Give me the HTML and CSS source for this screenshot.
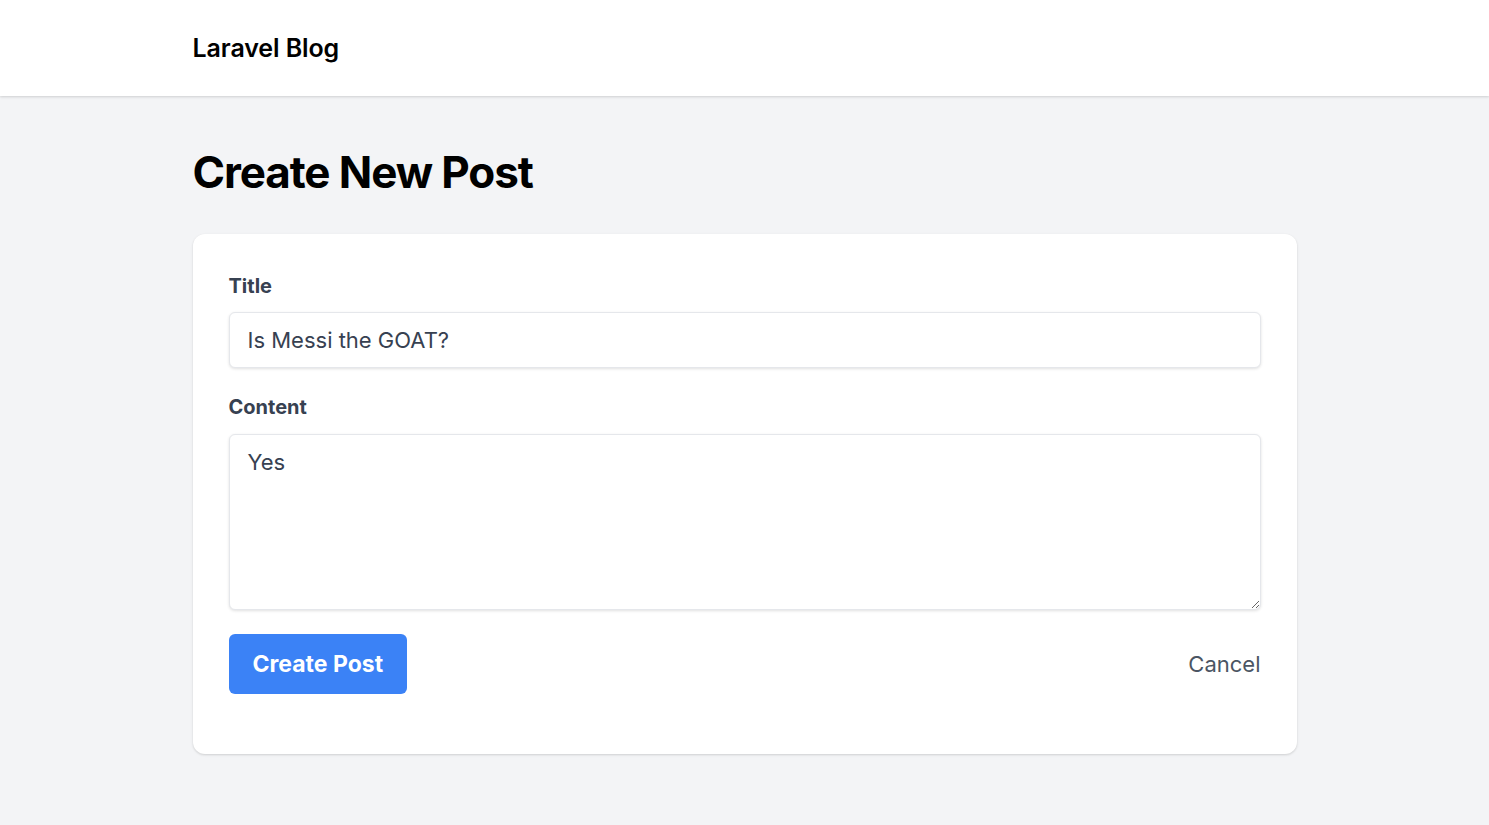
FILE: index.html
```html
<!DOCTYPE html>
<html lang="en">
<head>
<meta charset="utf-8">
<title>Laravel Blog</title>
<link rel="stylesheet" href="styles.css">
</head>
<body>
<header class="site-header">
  <div class="container header-inner">
    <a class="brand" href="#">Laravel Blog</a>
  </div>
</header>
<main class="container main">
  <h1 class="page-title">Create New Post</h1>
  <form class="card">
    <div class="field">
      <label class="label" for="title">Title</label>
      <input class="input" id="title" type="text" value="Is Messi the GOAT?">
    </div>
    <div class="field">
      <label class="label" for="content">Content</label>
      <textarea class="input textarea" id="content">Yes</textarea>
    </div>
    <div class="actions">
      <button class="btn" type="button">Create Post</button>
      <a class="cancel" href="#">Cancel</a>
    </div>
  </form>
</main>
</body>
</html>
```
FILE: styles.css
```css
* { box-sizing: border-box; }
html, body { margin: 0; padding: 0; }
body {
  font-family: Inter, "Noto Sans", sans-serif;
  background: #f3f4f6;
  color: #000;
  min-height: 100vh;
}
.container {
  max-width: 1152px;
  margin: 0 auto;
  padding: 0 24px;
}
.site-header {
  background: #fff;
  height: 96px;
  box-shadow: 0 1px 3px rgba(0,0,0,0.1), 0 1px 2px rgba(0,0,0,0.06);
  position: relative;
}
.header-inner {
  height: 96px;
  display: flex;
  align-items: center;
}
.brand {
  font-size: 25px;
  font-weight: 600;
  color: #000;
  text-decoration: none;
  letter-spacing: -0.1px;
}
.main { padding-top: 48px; }
.page-title {
  margin: 0 0 34px;
  font-size: 44px;
  line-height: 56px;
  font-weight: 700;
  letter-spacing: -1.1px;
}
.card {
  background: #fff;
  border-radius: 12px;
  box-shadow: 0 1px 3px rgba(0,0,0,0.1), 0 1px 2px rgba(0,0,0,0.06);
  padding: 38px 36px 38px;
}
.field { margin-bottom: 24px; }
.field:first-child { margin-bottom: 25px; }
.label {
  display: block;
  font-size: 20px;
  line-height: 28px;
  font-weight: 700;
  color: #374151;
  margin-bottom: 12px;
}
.field:nth-child(2) .label { margin-bottom: 13px; }
.input {
  display: block;
  width: 100%;
  height: 56px;
  border: 1px solid #e5e7eb;
  border-radius: 6px;
  padding: 0 18px;
  font-family: inherit;
  font-size: 22px;
  color: #374151;
  background: #fff;
  box-shadow: 0 1px 3px rgba(0,0,0,0.12);
  outline: none;
}
.textarea {
  height: 176px;
  padding: 12px 18px;
  line-height: 30px;
  resize: vertical;
}
.actions {
  display: flex;
  justify-content: space-between;
  align-items: center;
  margin-bottom: 22px;
}
.btn {
  background: #3b82f6;
  color: #fff;
  border: 0;
  border-radius: 6px;
  height: 60px;
  padding: 0 24px;
  font-family: inherit;
  font-size: 23px;
  font-weight: 700;
  cursor: pointer;
}
.cancel {
  font-size: 22px;
  color: #4b5563;
  text-decoration: none;
}
```
